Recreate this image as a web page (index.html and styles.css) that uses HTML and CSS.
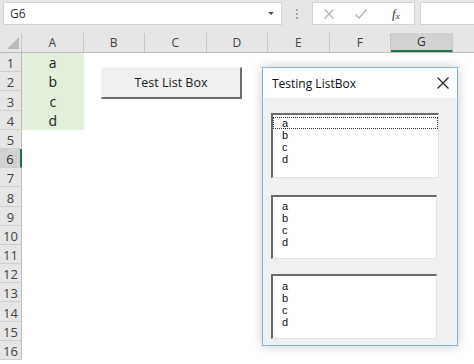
FILE: index.html
```html
<!DOCTYPE html>
<html>
<head>
<meta charset="utf-8">
<link rel="stylesheet" href="styles.css">
</head>
<body>
<div class="app">
  <div class="toolbar">
    <div class="namebox"><span class="nb-text">G6</span><span class="nb-arrow"></span></div>
    <div class="grip"><i></i><i></i><i></i></div>
    <div class="fbtns">
      <svg class="ic-x" width="12" height="12" viewBox="0 0 12 12"><path d="M1.5 1.5 L10.5 10.5 M10.5 1.5 L1.5 10.5" stroke="#b4b4b4" stroke-width="1.3" fill="none"/></svg>
      <svg class="ic-ok" width="14" height="12" viewBox="0 0 14 12"><path d="M1.5 6.5 L5 10 L12.5 1.5" stroke="#b4b4b4" stroke-width="1.3" fill="none"/></svg>
      <span class="fx">f<sub>x</sub></span>
    </div>
    <div class="fbar"></div>
  </div>
  <div class="sheet">
    <div class="colheads">
      <div class="corner"><svg width="12" height="12" viewBox="0 0 12 12"><path d="M12 0 L12 12 L0 12 Z" fill="#b9b9b9"/></svg></div>
      <div class="ch">A</div>
      <div class="ch">B</div>
      <div class="ch">C</div>
      <div class="ch">D</div>
      <div class="ch">E</div>
      <div class="ch">F</div>
      <div class="ch sel">G</div>
      <div class="ch fill"></div>
    </div>
    <div class="body">
      <div class="rowheads">
        <div class="rh">1</div><div class="rh">2</div><div class="rh">3</div><div class="rh">4</div>
        <div class="rh">5</div><div class="rh sel">6</div><div class="rh">7</div><div class="rh">8</div>
        <div class="rh">9</div><div class="rh">10</div><div class="rh">11</div><div class="rh">12</div>
        <div class="rh">13</div><div class="rh">14</div><div class="rh">15</div><div class="rh">16</div>
      </div>
      <div class="colA">
        <div class="cell">a</div><div class="cell">b</div><div class="cell">c</div><div class="cell">d</div>
      </div>
    </div>
  </div>

  <div class="xlbtn">Test List Box</div>

  <div class="dialog">
    <div class="dtitle">
      <span>Testing ListBox</span>
      <svg class="close" width="12" height="12" viewBox="0 0 12 12"><path d="M0.5 0.5 L11.5 11.5 M11.5 0.5 L0.5 11.5" stroke="#222" stroke-width="1.2" fill="none"/></svg>
    </div>
    <div class="dbody">
      <div class="lb lb1">
        <div class="item focus">a</div><div class="item">b</div><div class="item">c</div><div class="item">d</div>
      </div>
      <div class="lb lb2">
        <div class="item">a</div><div class="item">b</div><div class="item">c</div><div class="item">d</div>
      </div>
      <div class="lb lb3">
        <div class="item">a</div><div class="item">b</div><div class="item">c</div><div class="item">d</div>
      </div>
    </div>
  </div>
</div>
</body>
</html>
```

FILE: styles.css
```css
* { box-sizing: border-box; }
html, body { margin: 0; padding: 0; background: #fff; }
body { width: 474px; height: 364px; overflow: hidden; font-family: "Open Sans", "Noto Sans", sans-serif; }
.app { position: relative; width: 474px; height: 364px; overflow: hidden; }

.toolbar {
  height: 33px;
  background: #e6e6e6;
  display: flex;
  align-items: flex-start;
  padding-top: 2px;
  padding-left: 3px;
}
.namebox {
  width: 279px;
  height: 23px;
  background: #fff;
  border: 1px solid #d4d4d4;
  display: flex;
  align-items: center;
  justify-content: space-between;
  padding: 0 7px 0 6px;
}
.nb-text { font-size: 12px; color: #333; }
.nb-arrow {
  width: 0; height: 0;
  border-left: 3px solid transparent;
  border-right: 3px solid transparent;
  border-top: 3px solid #555;
}
.grip {
  width: 30px;
  height: 23px;
  display: flex;
  flex-direction: column;
  align-items: center;
  justify-content: center;
  gap: 2px;
}
.grip i { display: block; width: 2px; height: 2px; background: #a8a8a8; }
.fbtns {
  width: 103px;
  height: 23px;
  background: #fff;
  border: 1px solid #d4d4d4;
  display: flex;
  align-items: center;
  padding-left: 10px;
}
.ic-x { margin-right: 19px; }
.ic-ok { margin-right: 24px; }
.fx { font-family: "Liberation Serif", serif; font-style: italic; font-size: 13px; color: #333; }
.fx sub { font-size: 9px; vertical-align: -1px; }
.fbar {
  flex: 1;
  height: 23px;
  margin-left: 5px;
  background: #fff;
  border: 1px solid #d4d4d4;
  border-right: none;
}

.colheads { display: flex; height: 20px; background: #e6e6e6; border-bottom: 1px solid #bdbdbd; }
.corner {
  width: 22px;
  flex: none;
  display: flex;
  align-items: flex-end;
  justify-content: flex-end;
  padding: 0 2px 3px 0;
  border-right: 1px solid #c6c6c6;
}
.ch {
  width: 61.5px;
  flex: none;
  border-right: 1px solid #c9c9c9;
  display: flex;
  align-items: center;
  justify-content: center;
  font-size: 12px;
  color: #444;
}
.ch.sel { background: #d2d2d2; border-bottom: 2px solid #217346; color: #333; }
.ch.fill { flex: 1; border-right: none; }

.body { display: flex; }
.rowheads { width: 22px; flex: none; background: #e6e6e6; }
.rh {
  height: 19.2px;
  border-bottom: 1px solid #cfcfcf;
  border-right: 1px solid #bdbdbd;
  display: flex;
  align-items: flex-end;
  justify-content: center;
  padding-bottom: 0;
  font-size: 13px;
  line-height: 16px;
  color: #444;
}
.rh.sel { background: #d2d2d2; border-right: 2px solid #217346; color: #333; }
.colA { width: 61.5px; flex: none; }
.cell {
  height: 19.2px;
  background: #e2efda;
  display: flex;
  align-items: flex-end;
  justify-content: center;
  font-size: 14px;
  line-height: 18px;
  color: #222;
}

.xlbtn {
  position: absolute;
  left: 101px;
  top: 67px;
  width: 141px;
  height: 32px;
  background: #efefef;
  border-top: 1px solid #f8f8f8;
  border-left: 1px solid #f8f8f8;
  border-right: 2px solid #6e6e6e;
  border-bottom: 2px solid #6e6e6e;
  display: flex;
  align-items: center;
  justify-content: center;
  font-size: 12.5px;
  color: #222;
}

.dialog {
  position: absolute;
  left: 262px;
  top: 67px;
  width: 196px;
  height: 279px;
  border: 1px solid #86b3dc;
  background: #f0f0f0;
  box-shadow: 0 0 10px rgba(0,0,0,0.22);
  display: flex;
  flex-direction: column;
}
.dtitle {
  height: 30px;
  flex: none;
  background: #fff;
  display: flex;
  align-items: center;
  justify-content: space-between;
  padding: 0 8px 0 9px;
  font-size: 12px;
  color: #111;
}
.dbody { padding: 15px 0 0 8px; display: flex; flex-direction: column; }
.lb {
  background: #fff;
  border-top: 2px solid #6a6a6a;
  border-left: 2px solid #6a6a6a;
  border-right: 1px solid #e3e3e3;
  border-bottom: 1px solid #e3e3e3;
  font-family: "Liberation Sans", "DejaVu Sans", sans-serif;
  font-size: 11px;
  line-height: 12px;
  color: #111;
  padding: 2px 0 0 0;
}
.lb1 { width: 168px; height: 65px; }
.lb2 { width: 166px; height: 64px; margin-top: 17px; padding-top: 3px; }
.lb3 { width: 166px; height: 65px; margin-top: 15px; padding-top: 4px; }
.item { padding-left: 9px; height: 12px; }
.item.focus { outline: 1px dotted #333; outline-offset: -1px; margin-right: 0; }
```
